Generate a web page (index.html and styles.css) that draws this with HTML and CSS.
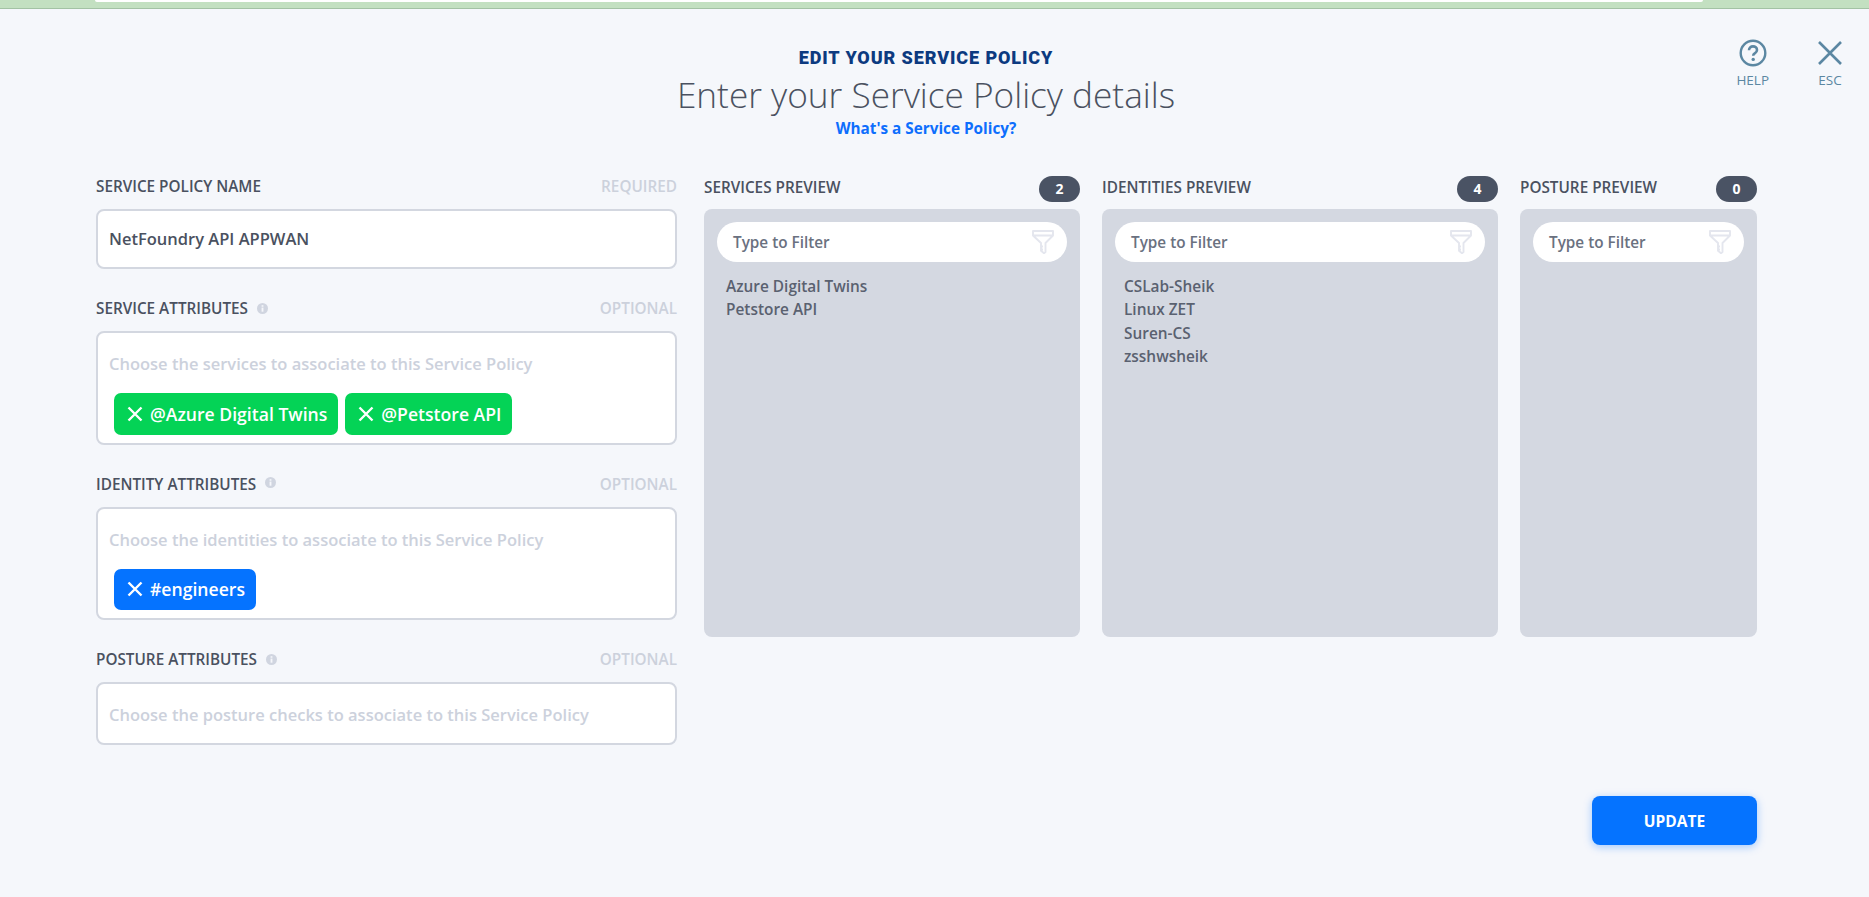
FILE: index.html
```html
<!DOCTYPE html>
<html lang="en">
<head>
<meta charset="utf-8">
<title>Edit Service Policy</title>
<link rel="stylesheet" href="styles.css">
</head>
<body>
<div class="topbar"><div class="topbar-card"></div></div>
<div class="actions">
  <div class="action">
    <svg class="action-icon" viewBox="0 0 28 28" width="28" height="28"><circle cx="14" cy="14" r="12.3" fill="none" stroke="#5b87a2" stroke-width="2.4"/><path d="M10 11.300c0-2.400 1.800-3.900 4-3.900s4 1.400 4 3.500c0 1.800-1 2.600-2.200 3.400-1 .7-1.600 1.200-1.600 2.400" fill="none" stroke="#5b87a2" stroke-width="2.600"/><circle cx="14.200" cy="20.400" r="1.700" fill="#5b87a2"/></svg>
    <span>HELP</span>
  </div>
  <div class="action">
    <svg class="action-icon" viewBox="0 0 28 28" width="28" height="28"><path d="M3 3l22 22M25 3L3 25" fill="none" stroke="#5b87a2" stroke-width="2.600"/></svg>
    <span>ESC</span>
  </div>
</div>
<header class="head">
  <div class="eyebrow">EDIT YOUR SERVICE POLICY</div>
  <h1 class="title">Enter your Service Policy details</h1>
  <a class="link">What's a Service Policy?</a>
</header>
<main class="grid">
  <section class="form">
    <div class="field">
      <div class="label-row"><span class="label">SERVICE POLICY NAME</span><span class="hint">REQUIRED</span></div>
      <div class="box box-name">NetFoundry API APPWAN</div>
    </div>
    <div class="field">
      <div class="label-row"><span class="label">SERVICE ATTRIBUTES</span><svg class="info" viewBox="0 0 12 12" width="11" height="11"><circle cx="6" cy="6" r="6" fill="#d0d5e0"/><rect x="5" y="5" width="2" height="4.500" fill="#f5f7fb"/><rect x="5" y="2.400" width="2" height="1.700" fill="#f5f7fb"/></svg><span class="hint">OPTIONAL</span></div>
      <div class="box box-tags">
        <div class="placeholder">Choose the services to associate to this Service Policy</div>
        <div class="chips">
          <span class="chip chip-green"><svg class="chip-x" viewBox="0 0 16 16" width="16" height="16"><path d="M1.500 1.500l13 13M14.500 1.500l-13 13" stroke="#fff" stroke-width="2.400" fill="none"/></svg>@Azure Digital Twins</span>
          <span class="chip chip-green"><svg class="chip-x" viewBox="0 0 16 16" width="16" height="16"><path d="M1.500 1.500l13 13M14.500 1.500l-13 13" stroke="#fff" stroke-width="2.400" fill="none"/></svg>@Petstore API</span>
        </div>
      </div>
    </div>
    <div class="field">
      <div class="label-row"><span class="label">IDENTITY ATTRIBUTES</span><svg class="info info-up" viewBox="0 0 12 12" width="11" height="11"><circle cx="6" cy="6" r="6" fill="#d0d5e0"/><rect x="5" y="5" width="2" height="4.500" fill="#f5f7fb"/><rect x="5" y="2.400" width="2" height="1.700" fill="#f5f7fb"/></svg><span class="hint">OPTIONAL</span></div>
      <div class="box box-tags">
        <div class="placeholder">Choose the identities to associate to this Service Policy</div>
        <div class="chips">
          <span class="chip chip-blue"><svg class="chip-x" viewBox="0 0 16 16" width="16" height="16"><path d="M1.500 1.500l13 13M14.500 1.500l-13 13" stroke="#fff" stroke-width="2.400" fill="none"/></svg>#engineers</span>
        </div>
      </div>
    </div>
    <div class="field">
      <div class="label-row"><span class="label">POSTURE ATTRIBUTES</span><svg class="info" viewBox="0 0 12 12" width="11" height="11"><circle cx="6" cy="6" r="6" fill="#d0d5e0"/><rect x="5" y="5" width="2" height="4.500" fill="#f5f7fb"/><rect x="5" y="2.400" width="2" height="1.700" fill="#f5f7fb"/></svg><span class="hint">OPTIONAL</span></div>
      <div class="box box-posture"><div class="placeholder">Choose the posture checks to associate to this Service Policy</div></div>
    </div>
  </section>

  <section class="preview">
    <div class="preview-head"><span class="label">SERVICES PREVIEW</span><span class="badge">2</span></div>
    <div class="panel">
      <div class="filter"><span>Type to Filter</span><svg class="funnel" viewBox="0 0 22 24" width="22" height="24"><path d="M1 1h20v4.500L13.500 13v9l-1.500 1.200-3-2.400V13L1 5.500zM1 5.500h20M9 16.500h2M9 19.500h2" fill="none" stroke="#e4e6ee" stroke-width="1.900" stroke-linejoin="round"/></svg></div>
      <ul class="items"><li>Azure Digital Twins</li><li>Petstore API</li></ul>
    </div>
  </section>

  <section class="preview">
    <div class="preview-head"><span class="label">IDENTITIES PREVIEW</span><span class="badge">4</span></div>
    <div class="panel">
      <div class="filter"><span>Type to Filter</span><svg class="funnel" viewBox="0 0 22 24" width="22" height="24"><path d="M1 1h20v4.500L13.500 13v9l-1.500 1.200-3-2.400V13L1 5.500zM1 5.500h20M9 16.500h2M9 19.500h2" fill="none" stroke="#e4e6ee" stroke-width="1.900" stroke-linejoin="round"/></svg></div>
      <ul class="items"><li>CSLab-Sheik</li><li>Linux ZET</li><li>Suren-CS</li><li>zsshwsheik</li></ul>
    </div>
  </section>

  <section class="preview">
    <div class="preview-head"><span class="label">POSTURE PREVIEW</span><span class="badge">0</span></div>
    <div class="panel">
      <div class="filter"><span>Type to Filter</span><svg class="funnel" viewBox="0 0 22 24" width="22" height="24"><path d="M1 1h20v4.500L13.500 13v9l-1.500 1.200-3-2.400V13L1 5.500zM1 5.500h20M9 16.500h2M9 19.500h2" fill="none" stroke="#e4e6ee" stroke-width="1.900" stroke-linejoin="round"/></svg></div>
    </div>
  </section>
</main>
<footer class="foot"><button class="update">UPDATE</button></footer>
</body>
</html>
```
FILE: styles.css
```css
* { box-sizing: border-box; }
html, body { margin: 0; height: 100%; }
body {
  background: #f5f7fb;
  font-family: "Open Sans", sans-serif;
  color: #4a5160;
  overflow: hidden;
  position: relative;
}
.topbar {
  height: 9px;
  background: #c3e0c1;
  border-bottom: 1px solid #a3c2a4;
  padding: 0 166px 0 95px;
}
.topbar-card {
  height: 2px;
  background: #fff;
  border-radius: 0 0 8px 8px;
}
.actions {
  position: absolute;
  top: 39px;
  right: 25px;
  display: flex;
  gap: 47px;
}
.action {
  display: flex;
  flex-direction: column;
  align-items: center;
  gap: 5px;
  font-size: 13.500px;
  font-weight: 500;
  color: #5b87a2;
  line-height: 16px;
}
.action-icon { display: block; }
.head {
  text-align: center;
  margin-left: -17px;
  padding-top: 39px;
  height: 167px;
  display: flex;
  flex-direction: column;
  align-items: center;
}
.eyebrow {
  font-family: "Roboto", sans-serif;
  font-weight: 900;
  font-size: 18px;
  line-height: 20px;
  letter-spacing: .9px;
  color: #0c3a80;
}
.title {
  margin: 4px 0 0;
  font-weight: 300;
  font-size: 35.200px;
  line-height: 44px;
  color: #4a5160;
}
.link {
  font-size: 15.300px;
  font-weight: 700;
  line-height: 20px;
  margin-top: 2px;
  color: #0d6efd;
}
.grid {
  display: grid;
  grid-template-columns: 586px 376px 396px 237px;
  column-gap: 22px;
  padding-left: 96px;
  align-items: start;
}
.form { display: flex; flex-direction: column; gap: 29px; width: 581px; }
.label-row {
  display: flex;
  align-items: center;
  height: 20px;
  margin-bottom: 13px;
}
.label {
  font-size: 15.300px;
  font-weight: 600;
  line-height: 20px;
  color: #4a5160;
}
.hint {
  margin-left: auto;
  font-size: 15.300px;
  font-weight: 600;
  color: #ccd1dc;
}
.info { margin-left: 9px; }
.info-up { margin-top: -2px; }
.box {
  background: #fff;
  border: 2px solid #d3d7e0;
  border-radius: 8px;
  padding: 0 11px;
}
.box-name {
  height: 60px;
  line-height: 56px;
  font-size: 16.500px;
  font-weight: 600;
  color: #4a5160;
}
.box-tags { height: 113.500px; padding-top: 20px; }
.box-posture { height: 63px; padding-top: 20px; }
.placeholder {
  font-size: 16.500px;
  font-weight: 600;
  line-height: 22px;
  color: #ccd1dc;
}
.chips {
  display: flex;
  gap: 7px;
  margin-top: 18px;
  padding-left: 5px;
}
.chip {
  display: inline-flex;
  align-items: center;
  gap: 7px;
  height: 41.500px;
  padding: 0 11px 0 13px;
  border-radius: 7px;
  color: #fff;
  font-size: 17.600px;
  font-weight: 600;
}
.chip-green { background: #04d356; }
.chip-blue { background: #0573ff; }
.chip-x { display: block; }
.preview-head {
  display: flex;
  justify-content: space-between;
  align-items: flex-start;
  height: 33px;
}
.preview-head .label { line-height: 22px; }
.badge {
  min-width: 41px;
  height: 26px;
  border-radius: 13px;
  background: #4a5364;
  color: #fff;
  font-size: 14px;
  font-weight: 700;
  line-height: 26px;
  text-align: center;
}
.panel {
  height: 428px;
  background: #d4d8e1;
  border-radius: 8px;
  padding: 13px;
}
.filter {
  display: flex;
  align-items: center;
  justify-content: space-between;
  height: 40px;
  padding: 0 13px 0 16px;
  background: #fff;
  border-radius: 20px;
  font-size: 15.300px;
  font-weight: 600;
  color: #6a7180;
}
.items {
  list-style: none;
  margin: 13px 0 0;
  padding: 0 0 0 9px;
  font-size: 15.400px;
  font-weight: 600;
  line-height: 23.300px;
  color: #5a6170;
}
.foot {
  display: flex;
  justify-content: flex-end;
  padding: 0 112px 0 0;
  margin-top: 51px;
}
.update {
  width: 165px;
  height: 49px;
  border: 0;
  border-radius: 8px;
  background: #0573ff;
  color: #fff;
  font-family: "Open Sans", sans-serif;
  font-size: 15.500px;
  font-weight: 700;
  box-shadow: 0 2px 8px rgba(5, 115, 255, .35);
}
```
